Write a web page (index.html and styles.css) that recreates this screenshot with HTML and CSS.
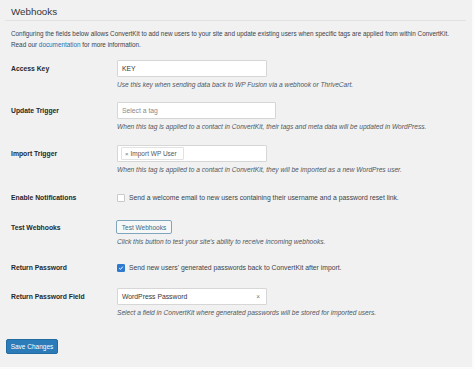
FILE: index.html
```html
<!DOCTYPE html>
<html>
<head>
<meta charset="utf-8">
<link rel="stylesheet" href="styles.css">
</head>
<body>
<div class="page">
  <h2 class="title">Webhooks</h2>
  <p class="intro">Configuring the fields below allows ConvertKit to add new users to your site and update existing users when specific tags are applied from within ConvertKit.<br>Read our <a href="#">documentation</a> for more information.</p>

  <div class="row r1">
    <div class="label l-input">Access Key</div>
    <div class="field">
      <div class="input w150"><span class="val">KEY</span></div>
      <p class="hint">Use this key when sending data back to WP Fusion via a webhook or ThriveCart.</p>
    </div>
  </div>

  <div class="row r2">
    <div class="label l-input">Update Trigger</div>
    <div class="field">
      <div class="input w159"><span class="ph">Select a tag</span></div>
      <p class="hint">When this tag is applied to a contact in ConvertKit, their tags and meta data will be updated in WordPress.</p>
    </div>
  </div>

  <div class="row r3">
    <div class="label l-input">Import Trigger</div>
    <div class="field">
      <div class="input w150 tags"><span class="chip"><span class="x">×</span>Import WP User</span></div>
      <p class="hint">When this tag is applied to a contact in ConvertKit, they will be imported as a new WordPres user.</p>
    </div>
  </div>

  <div class="row r4">
    <div class="label l-check">Enable Notifications</div>
    <div class="field">
      <label class="check"><span class="box"></span>Send a welcome email to new users containing their username and a password reset link.</label>
    </div>
  </div>

  <div class="row r5">
    <div class="label l-btn">Test Webhooks</div>
    <div class="field">
      <button class="btn">Test Webhooks</button>
      <p class="hint">Click this button to test your site's ability to receive incoming webhooks.</p>
    </div>
  </div>

  <div class="row r6">
    <div class="label l-check">Return Password</div>
    <div class="field">
      <label class="check"><span class="box on"><svg viewBox="0 0 8 8" width="8" height="8"><path d="M1.6 4.2 L3.3 5.8 L6.4 2.2" fill="none" stroke="#fff" stroke-width="1.3"/></svg></span>Send new users' generated passwords back to ConvertKit after import.</label>
    </div>
  </div>

  <div class="row r7">
    <div class="label l-input">Return Password Field</div>
    <div class="field">
      <div class="input w150 select"><span class="val">WordPress Password</span><span class="clear">×</span></div>
      <p class="hint">Select a field in ConvertKit where generated passwords will be stored for imported users.</p>
    </div>
  </div>

  <button class="save">Save Changes</button>
</div>
</body>
</html>
```

FILE: styles.css
```css
html, body {
  margin: 0;
  padding: 0;
  background: #fbfbfb;
}
body {
  font-family: "Liberation Sans", Arial, sans-serif;
  color: #23282d;
}
.page {
  width: 472px;
  height: 367px;
  background: #f1f1f1;
  box-sizing: border-box;
  padding: 0 0 0 11px;
  overflow: hidden;
}
.title {
  margin: 0 6px 0 -6px;
  padding: 7px 0 3px 6px;
  font-size: 9.8px;
  line-height: 10px;
  font-weight: normal;
  color: #32373c;
  border-bottom: 1px solid #e2e2e2;
}
.intro {
  margin: 7px 0 0;
  font-size: 6.35px;
  line-height: 11px;
  color: #3c434a;
  white-space: nowrap;
}
.intro a {
  color: #2271b1;
  text-decoration: none;
}
.row {
  display: flex;
  align-items: flex-start;
}
.label {
  width: 106px;
  flex: none;
  font-size: 6.8px;
  font-weight: bold;
  color: #23282d;
  display: flex;
  align-items: center;
}
.l-input { height: 17px; }
.l-check { height: 9px; }
.l-btn { height: 14px; }
.field {
  display: flex;
  flex-direction: column;
  align-items: flex-start;
}
.r1 { margin-top: 10px; }
.r2 { margin-top: 13px; }
.r3 { margin-top: 14px; }
.r4 { margin-top: 19px; }
.r5 { margin-top: 18px; }
.r6 { margin-top: 17px; }
.r7 { margin-top: 16px; }

.input {
  box-sizing: border-box;
  height: 17px;
  background: #fff;
  border: 1px solid #d6d6d6;
  border-radius: 1px;
  display: flex;
  align-items: center;
  padding: 0 4px;
  font-size: 6.8px;
  color: #32373c;
}
.w150 { width: 150px; }
.w159 { width: 159px; }
.ph { color: #8a8a8a; }
.tags { padding: 0 3px; }
.chip {
  box-sizing: border-box;
  height: 13px;
  display: inline-flex;
  align-items: center;
  padding: 0 4px 0 3px;
  background: #fff;
  border: 1px solid #e2e2e2;
  border-radius: 1px;
  font-size: 6.5px;
  color: #555;
  width: 63px;
}
.chip .x {
  font-size: 6px;
  margin-right: 2px;
  color: #777;
}
.select { justify-content: space-between; padding-right: 6px; }
.clear { font-size: 6.5px; color: #777; }

.hint {
  margin: 3px 0 0;
  font-size: 6.6px;
  line-height: 9px;
  font-style: italic;
  color: #50575e;
  white-space: nowrap;
}
.check {
  display: flex;
  align-items: center;
  height: 9px;
  font-size: 6.8px;
  color: #3c434a;
  white-space: nowrap;
}
.box {
  box-sizing: border-box;
  width: 8px;
  height: 8px;
  border: 1px solid #c9c9c9;
  background: #fff;
  border-radius: 1px;
  margin-right: 4px;
  margin-left: 0;
  display: inline-flex;
  align-items: center;
  justify-content: center;
}
.box.on {
  background: #2e7ad1;
  border-color: #2e7ad1;
}
.box svg { display: block; }
.btn {
  box-sizing: border-box;
  height: 14px;
  width: 56px;
  margin: 0 0 0 -1px;
  padding: 0;
  font-family: inherit;
  font-size: 6.5px;
  color: #3d6a86;
  background: #f6f7f7;
  border: 1px solid #7fa6bc;
  border-radius: 2px;
}
.save {
  display: block;
  box-sizing: border-box;
  margin: 22px 0 0 -5px;
  height: 15px;
  width: 52px;
  padding: 0;
  font-family: inherit;
  font-size: 6.5px;
  color: #fff;
  background: #2b7bb9;
  border: 1px solid #236ba3;
  border-radius: 2px;
}
```
